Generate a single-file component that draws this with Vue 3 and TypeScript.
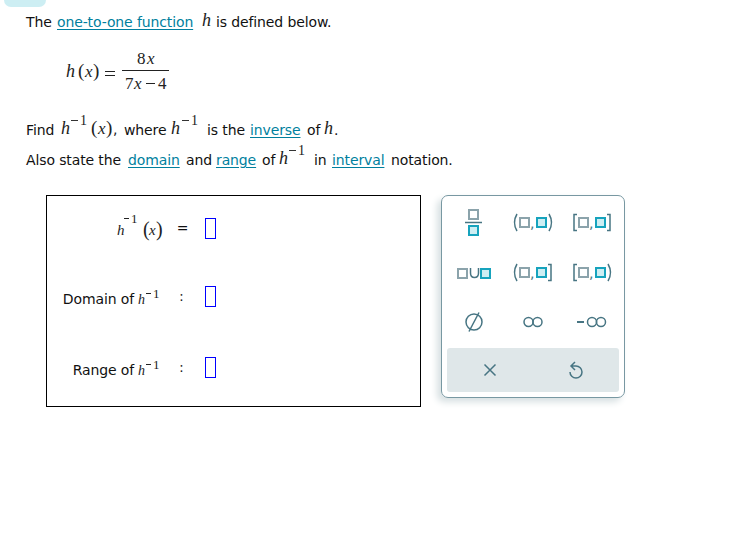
<script setup lang="ts">
interface Row { label: string; sep: string; fn: boolean }
const rows: Row[] = [
  { label: '', sep: '=', fn: true },
  { label: 'Domain of', sep: ':', fn: false },
  { label: 'Range of', sep: ':', fn: false },
]
const intervals: string[][] = [['(', ')'], ['[', ']'], ['(', ']'], ['[', ')']]
const parens: Record<string, string> = {
  '(': 'M4 1Q-1 9.500 4 18',
  '[': 'M5 1.500H2V17.500H5',
  ')': 'M36 1Q41 9.500 36 18',
  ']': 'M35 1.500H38V17.500H35',
}
</script>

<template>
  <main class="page">
    <div class="tab"></div>
    <p class="line first">
      <span class="t" style="--w: 31px">The</span><a class="t" style="--w: 139px">one-to-one function</a>
      <svg class="m" width="20" height="24"><text x="6" y="18" class="i" font-size="18">h</text></svg>
      <span class="t">is defined below.</span>
    </p>
    <svg class="formula" width="120" height="50">
      <g font-size="17">
        <text x="6" y="30" class="i" font-size="18">h</text>
        <text x="18" y="30" font-size="19">(</text><text x="25" y="30" class="i">x</text><text x="33" y="30" font-size="19">)</text>
        <path d="M45 24.500H55M45 28.500H55" stroke="#222" />
        <text x="77" y="17">8</text><text x="87" y="17" class="i">x</text>
        <path d="M62 23.500H109" stroke="#222" />
        <text x="65" y="42">7</text><text x="74" y="42" class="i">x</text>
        <path d="M86 36.500H95" stroke="#222" /><text x="98" y="42">4</text>
      </g>
    </svg>
    <p class="line second">
      <span class="t" style="--w: 30px">Find</span>
      <svg class="m" width="68" height="34"><text x="5" y="28" class="i" font-size="18">h</text><path d="M15 14.500H22" stroke="#333" /><text x="24" y="19" font-size="14">1</text><text x="35" y="28" font-size="19">(</text><text x="42" y="28" class="i" font-size="17">x</text><text x="50" y="28" font-size="19">)</text><text x="57" y="28" class="s" font-size="14">,</text></svg>
      <span class="t" style="--w: 42px">where</span>
      <svg class="m" width="41" height="34"><text x="5" y="28" class="i" font-size="18">h</text><path d="M16 14.500H23" stroke="#333" /><text x="25" y="19" font-size="14">1</text></svg>
      <span class="t" style="--w: 43px">is the</span><a class="t" style="--w: 51px">inverse</a>
      <span class="t gap" style="--w: 17px">of</span>
      <svg class="m" width="10" height="34"><text x="0" y="28" class="i" font-size="18">h</text></svg><span class="t">.</span>
    </p>
    <p class="line third">
      <span class="t" style="--w: 102px">Also state the</span><a class="t" style="--w: 52px">domain</a>
      <span class="t gap" style="--w: 30px">and</span><a class="t" style="--w: 40px">range</a>
      <span class="t gap" style="--w: 17px">of</span>
      <svg class="m" width="35" height="34"><text x="0" y="28" class="i" font-size="18">h</text><path d="M10 14.500H17" stroke="#333" /><text x="19" y="19" font-size="14">1</text></svg>
      <span class="t" style="--w: 18px">in</span><a class="t" style="--w: 53px">interval</a>
      <span class="t gap">notation.</span>
    </p>

    <div class="work">
      <section class="answers">
        <div v-for="row in rows" :key="row.label" class="row">
          <svg v-if="row.fn" width="105" height="40"><text x="57" y="27" class="i" font-size="15">h</text><path d="M64 10.500H69" stroke="#222" /><text x="71" y="15" font-size="13">1</text><text x="83" y="28" font-size="20">(</text><text x="89" y="27" class="i" font-size="15">x</text><text x="96" y="28" font-size="20">)</text></svg>
          <div v-else class="label"><span class="t">{{ row.label }}</span><svg width="25" height="30"><text x="4" y="20" class="i" font-size="14">h</text><path d="M12 9.500H17" stroke="#222" /><text x="19" y="14" font-size="13">1</text></svg></div>
          <span class="sep" :class="{ colon: !row.fn }">{{ row.sep }}</span>
          <span class="input"></span>
        </div>
      </section>

      <section class="palette">
        <div class="keys">
          <button aria-label="fraction"><svg width="18" height="28"><rect x="4" y="1" width="9" height="9" class="empty" /><path d="M0 13.500H17" class="ink" /><rect x="4" y="17" width="9" height="9" class="fill" /></svg></button>
          <template v-for="(pair, n) in intervals" :key="n">
            <button v-if="n === 2" aria-label="union"><svg width="36" height="20"><rect x="2" y="6" width="9" height="9" class="empty" /><path d="M14.500 5V10Q14.500 14.500 18.500 14.500T22.500 10V5" class="ink" /><rect x="25" y="6" width="9" height="9" class="fill" /></svg></button>
            <button aria-label="interval"><svg width="39" height="19"><path :d="parens[pair[0]]" class="ink" /><rect x="7" y="5" width="9" height="9" class="empty" /><text x="17" y="15" class="s comma">,</text><rect x="24" y="5" width="9" height="9" class="fill" /><path :d="parens[pair[1]]" class="ink" /></svg></button>
          </template>
          <button aria-label="empty set"><svg width="20" height="22"><ellipse cx="10" cy="11" rx="8" ry="8" class="ink" /><path d="M5 20.500L15 1.500" class="ink" /></svg></button>
          <button aria-label="infinity"><svg width="20" height="14"><circle cx="5.500" cy="7" r="4.500" class="ink" /><circle cx="14.500" cy="7" r="4.500" class="ink" /></svg></button>
          <button aria-label="negative infinity"><svg width="31" height="14"><path d="M1 7H8" class="ink thick" /><circle cx="16" cy="7" r="4.500" class="ink" /><circle cx="25" cy="7" r="4.500" class="ink" /></svg></button>
        </div>
        <div class="actions">
          <button aria-label="clear"><svg width="14" height="14"><path d="M1.500 1.500L12.500 12.500M12.500 1.500L1.500 12.500" class="ink" /></svg></button>
          <button aria-label="reset"><svg width="16" height="18"><path d="M2 11A6 6 0 1 0 8 5H3M7 1L3 5L7 9" class="ink" /></svg></button>
        </div>
      </section>
    </div>
  </main>
</template>

<style>
body { margin: 0; background: #fff; }
</style>
<style scoped>
.page { width: 737px; height: 534px; overflow: hidden; color: #111; font: 14px/20px "DejaVu Sans", sans-serif; }
.tab { width: 42px; height: 7px; margin-left: 4px; background: #cdeef3; border-radius: 0 0 8px 8px; }
svg { display: block; flex: none; overflow: visible; }
text { font-family: "Liberation Serif", serif; fill: #222; }
.i { font-style: italic; }
.s { font-family: "DejaVu Sans", sans-serif; }
.line { display: flex; align-items: flex-end; margin: 0 0 0 26px; white-space: nowrap; }
.t { width: var(--w, auto); flex: none; letter-spacing: -.12px; }
a { color: #007f9e; text-decoration: underline; text-underline-offset: 2px; }
.gap { margin-left: 6px; }
.first { height: 25px; }
.second { height: 35px; margin-top: 8px; }
.third { height: 30px; }
.formula { margin: 15px 0 0 60px; }
.work { display: flex; align-items: flex-start; margin: 25px 0 0 46px; }
.answers { box-sizing: border-box; width: 375px; height: 212px; border: 1px solid #000; padding-top: 12px; }
.row { display: flex; align-items: center; height: 71px; margin-left: 13px; }
.row:first-child { height: 40px; margin-bottom: 13px; }
.label { width: 100px; display: flex; justify-content: flex-end; align-items: center; position: relative; left: -1px; top: 2px; }
.row > svg { width: 100px; }
.sep { width: 45px; text-align: center; }
.colon { font-family: "Liberation Serif", serif; padding-right: 2px; box-sizing: border-box; }
.input { width: 9px; height: 19px; border: 1px solid #00f; }
.palette { box-sizing: border-box; width: 184px; height: 203px; margin-left: 20px; border: 1px solid #7898a2; border-radius: 7px; padding: 0 5px 5px; box-shadow: -4px 4px 7px #d7e0e2; }
.keys { display: grid; grid-template-columns: 54px 63px 55px; grid-template-rows: 53px 47px 52px; }
button { display: grid; place-items: center; border: 0; padding: 0; background: none; }
.ink { fill: none; stroke: #477583; stroke-width: 1.5; }
.thick { stroke-width: 2; }
.empty { fill: #fff; stroke: #8ba3ab; stroke-width: 2; }
.fill { fill: #cdeef3; stroke: #16a3bd; stroke-width: 2; }
.comma { fill: #477583; font-size: 14px; }
.actions { display: grid; grid-template-columns: 1fr 1fr; height: 44px; background: #dfe7e9; border-radius: 3px; }
</style>
